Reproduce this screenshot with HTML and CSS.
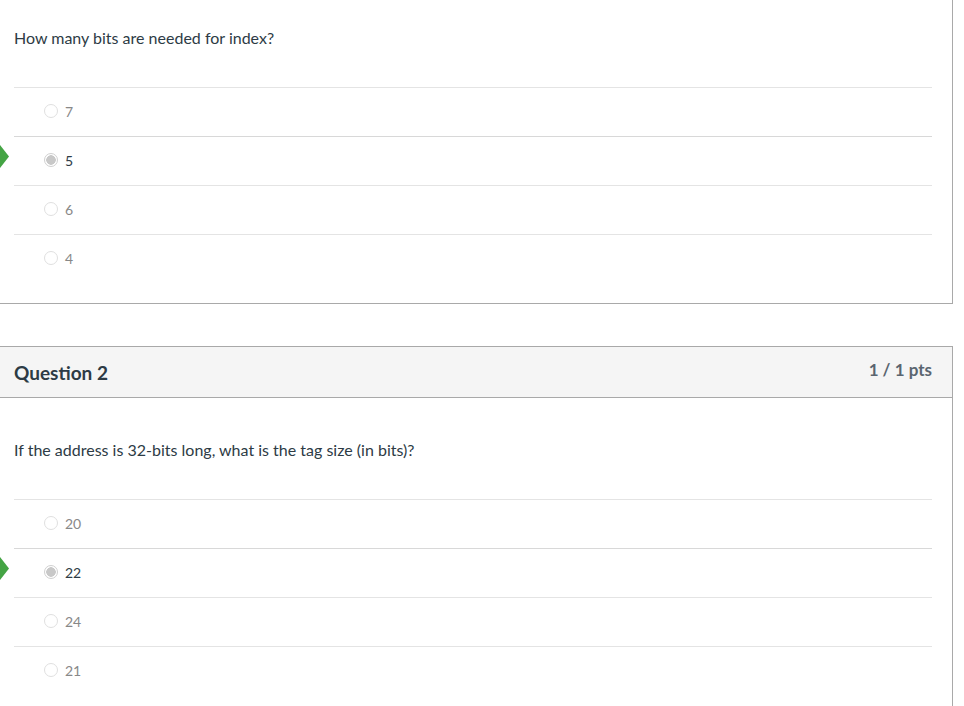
FILE: index.html
```html
<!DOCTYPE html>
<html>
<head>
<meta charset="utf-8">
<link rel="stylesheet" href="styles.css">
</head>
<body>
<div class="card card-first">
  <div class="question-text question-text-first">How many bits are needed for index?</div>
  <div class="answers">
    <div class="answer"><span class="radio"></span><span class="label">7</span></div>
    <div class="answer answer-selected"><span class="arrow"></span><span class="radio radio-on"></span><span class="label">5</span></div>
    <div class="answer"><span class="radio"></span><span class="label">6</span></div>
    <div class="answer"><span class="radio"></span><span class="label">4</span></div>
  </div>
</div>

<div class="card card-second">
  <div class="header">
    <span class="title">Question 2</span>
    <span class="pts">1 / 1 pts</span>
  </div>
  <div class="question-text">If the address is 32-bits long, what is the tag size (in bits)?</div>
  <div class="answers">
    <div class="answer"><span class="radio"></span><span class="label">20</span></div>
    <div class="answer answer-selected"><span class="arrow"></span><span class="radio radio-on"></span><span class="label">22</span></div>
    <div class="answer"><span class="radio"></span><span class="label">24</span></div>
    <div class="answer"><span class="radio"></span><span class="label">21</span></div>
  </div>
</div>
</body>
</html>
```

FILE: styles.css
```css
html, body {
  margin: 0;
  padding: 0;
  background: #fff;
}
body {
  font-family: Lato, "Open Sans", sans-serif;
  color: #2d3b45;
  overflow: hidden;
}
.card {
  width: 952px;
  border-right: 1px solid #a9a9a9;
  background: #fff;
}
.card-first {
  border-bottom: 1px solid #a9a9a9;
  padding-bottom: 20px;
}
.card-second {
  margin-top: 42px;
  border-top: 1px solid #a9a9a9;
  padding-bottom: 40px;
}
.header {
  height: 50px;
  background: #f5f5f5;
  border-bottom: 1px solid #a9a9a9;
  display: flex;
  align-items: center;
  justify-content: space-between;
  padding: 0 20px 0 14px;
}
.title {
  font-size: 19px;
  font-weight: 700;
}
.pts {
  font-size: 17px;
  font-weight: 700;
  color: #5a6570;
  position: relative;
  top: -3px;
}
.question-text {
  font-size: 16px;
  line-height: 20px;
  padding: 42px 14px 0;
  height: 59px;
}
.question-text-first {
  padding-top: 28px;
  height: 59px;
}
.answers {
  margin-left: 14px;
  width: 918px;
}
.answer {
  position: relative;
  height: 48px;
  border-top: 1px solid #e4e4e4;
  display: flex;
  align-items: center;
  padding-left: 30px;
  font-size: 14px;
  color: #888;
}
.answer-selected {
  border-top-color: #d8d8d8;
}
.answer-selected .label {
  color: #2d3b45;
}
.radio {
  width: 12px;
  height: 12px;
  border: 1px solid #e0e0e0;
  border-radius: 50%;
  background: #fff;
  margin-right: 7px;
  box-sizing: content-box;
  position: relative;
  top: -1px;
}
.radio-on {
  border-color: #d0d0d0;
  background: radial-gradient(circle, #c8c8c8 0 4.5px, #fff 5px);
}
.label {
  position: relative;
  top: -1px;
}
.arrow {
  position: absolute;
  left: -14px;
  top: 8px;
  width: 9px;
  height: 23px;
  background: #44a444;
  clip-path: polygon(0 0, 100% 50%, 0 100%);
}
```
